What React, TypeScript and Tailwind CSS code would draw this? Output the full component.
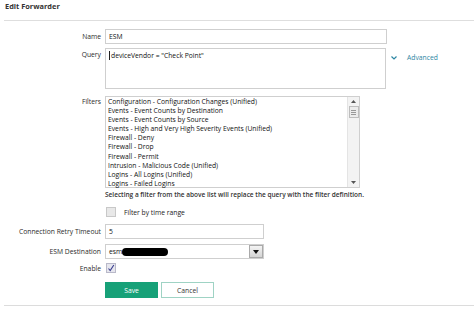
import React from "react";

const items = [
  "Configuration - Configuration Changes (Unified)",
  "Events - Event Counts by Destination",
  "Events - Event Counts by Source",
  "Events - High and Very High Severity Events (Unified)",
  "Firewall - Deny",
  "Firewall - Drop",
  "Firewall - Permit",
  "Intrusion - Malicious Code (Unified)",
  "Logins - All Logins (Unified)",
  "Logins - Failed Logins",
];

function Label({ children, className = "" }: { children: React.ReactNode; className?: string }) {
  return (
    <div className={`w-[101px] shrink-0 text-right text-[#2a2a2a] ${className}`}>{children}</div>
  );
}

export default function App() {
  return (
    <div
      className="w-[474px] h-[311px] bg-white text-[#222] overflow-hidden relative"
      style={{ fontFamily: '"Open Sans", "Noto Sans", sans-serif', fontSize: "6.75px", lineHeight: "9px" }}
    >
      <div className="h-[21px] border-b border-[#dedede] ml-[4px] flex items-center pl-[1px] pb-[7px]">
        <span className="font-bold text-[7.4px] text-[#333]">Edit Forwarder</span>
      </div>

      {/* Name */}
      <div className="flex items-center mt-[8px]">
        <Label>Name</Label>
        <div className="ml-[4px] w-[282px] h-[15px] border border-[#cfcfcf] flex items-center pl-[3px] text-[#111]">
          ESM
        </div>
      </div>

      {/* Query */}
      <div className="flex items-start mt-[4px]">
        <Label className="pt-[2px]">Query</Label>
        <div className="ml-[4px] w-[281px] h-[41px] border border-[#cfcfcf] pl-[3px] pt-[2px] text-[#111] flex">
          <span className="border-l border-[#222] pl-[1px] h-[9px] leading-[9px]">deviceVendor = "Check Point"</span>
        </div>
        <div className="flex items-center ml-[5px] mt-[5px] text-[#2d86a3]">
          <svg width="6" height="4" viewBox="0 0 6 4" className="mt-[1px]">
            <path d="M0.5 0.5 L3 3 L5.5 0.5" stroke="#2d86a3" strokeWidth="1.2" fill="none" />
          </svg>
          <span className="ml-[10px]">Advanced</span>
        </div>
      </div>

      {/* Filters */}
      <div className="flex items-start mt-[7px]">
        <Label className="pt-[1px]">Filters</Label>
        <div className="ml-[4px] w-[255px] h-[92px] border border-[#cfcfcf] flex">
          <div className="flex-1 pl-[2px] pt-[0px] text-[#111]" style={{ lineHeight: "9.1px" }}>
            {items.map((t) => (
              <div key={t} className="whitespace-nowrap">{t}</div>
            ))}
          </div>
          <div className="w-[12px] bg-[#f3f3f3] border-l border-[#e4e4e4] flex flex-col items-center">
            <div className="h-[9px] flex items-center">
              <svg width="5" height="3" viewBox="0 0 5 3"><path d="M0 3 L2.5 0 L5 3 Z" fill="#555" /></svg>
            </div>
            <div className="w-[10px] h-[12px] border border-[#bdbdbd] bg-[#ececec] flex flex-col items-center justify-center gap-[1px]">
              <div className="w-[5px] h-px bg-[#999]" />
              <div className="w-[5px] h-px bg-[#999]" />
              <div className="w-[5px] h-px bg-[#999]" />
            </div>
            <div className="flex-1" />
            <div className="h-[9px] flex items-center">
              <svg width="5" height="3" viewBox="0 0 5 3"><path d="M0 0 L2.5 3 L5 0 Z" fill="#555" /></svg>
            </div>
          </div>
        </div>
      </div>

      {/* Help text */}
      <div className="flex mt-[2px]">
        <div className="w-[105px] shrink-0" />
        <div className="text-[#333] font-semibold whitespace-nowrap text-[6.5px]">
          Selecting a filter from the above list will replace the query with the filter definition.
        </div>
      </div>

      {/* Filter by time range */}
      <div className="flex items-center mt-[8px]">
        <div className="w-[106px] shrink-0" />
        <div className="w-[10px] h-[10px] border border-[#c8c8c8] bg-[#e8e8e8]" />
        <span className="ml-[8px] text-[#222]">Filter by time range</span>
      </div>

      {/* Connection Retry Timeout */}
      <div className="flex items-center mt-[7px]">
        <Label>Connection Retry Timeout</Label>
        <div className="ml-[4px] w-[159px] h-[15px] border border-[#cfcfcf] flex items-center pl-[3px] text-[#111]">
          5
        </div>
      </div>

      {/* ESM Destination */}
      <div className="flex items-center mt-[5px]">
        <Label>ESM Destination</Label>
        <div className="ml-[4px] w-[159px] h-[15px] border border-[#cfcfcf] flex items-center pl-[3px] text-[#111] relative">
          <span>esm.</span>
          <div className="ml-[-2px] w-[46px] h-[8px] bg-black rounded-[4px]" />
          <div className="absolute right-0 top-0 w-[14px] h-[13px] border border-[#aaa] bg-gradient-to-b from-[#f4f4f4] to-[#d4d4d4] flex items-center justify-center">
            <svg width="6" height="4" viewBox="0 0 6 4"><path d="M0 0 L3 4 L6 0 Z" fill="#111" /></svg>
          </div>
        </div>
      </div>

      {/* Enable */}
      <div className="flex items-center mt-[4px]">
        <Label>Enable</Label>
        <div className="ml-[5px] w-[10px] h-[10px] border border-[#b9b9c9] bg-[#e6e6ee] flex items-center justify-center">
          <svg width="8" height="8" viewBox="0 0 8 8">
            <path d="M1.5 4.5 L3.2 6.5 L6.8 1" stroke="#3a3f8f" strokeWidth="1.1" fill="none" />
          </svg>
        </div>
      </div>

      {/* Buttons */}
      <div className="flex items-center mt-[9px]">
        <div className="w-[105px] shrink-0" />
        <div className="w-[53px] h-[16px] bg-[#17a178] text-white flex items-center justify-center">Save</div>
        <div className="ml-[3px] w-[53px] h-[16px] border border-[#9fd3c4] bg-white text-[#333] flex items-center justify-center">
          Cancel
        </div>
      </div>

      <div className="absolute left-[4px] right-0 top-[305px] border-t border-[#dcdcdc]" />
    </div>
  );
}
